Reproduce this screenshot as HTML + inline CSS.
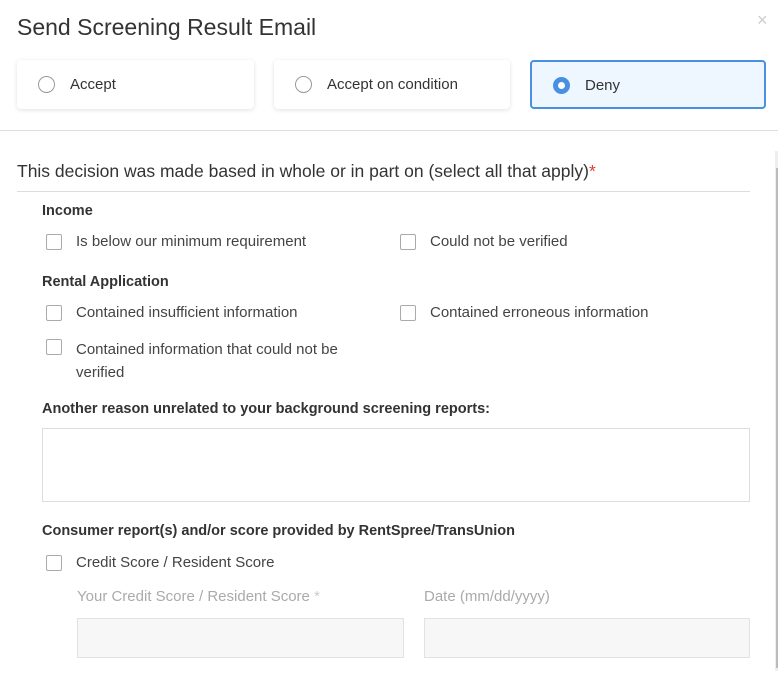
<!DOCTYPE html><html><head><style>
body{margin:0;width:778px;height:690px;background:#fff;font-family:"Liberation Sans",sans-serif;color:#333;position:relative;overflow:hidden}
.a{position:absolute;white-space:nowrap}
.card{position:absolute;top:60px;height:49px;background:#fff;border-radius:4px;box-shadow:0 1px 5px rgba(0,0,0,.12);font-size:15px}
.card .r{position:absolute;left:21px;top:16px;width:17px;height:17px;border:1px solid #999;border-radius:50%;box-sizing:border-box}
.card span{position:absolute;left:53px;top:16px}
.cb{position:absolute;width:16px;height:16px;border:1px solid #aaa;border-radius:2px;box-sizing:border-box}
.t{position:absolute;font-size:15px;color:#444;white-space:nowrap}
.h{position:absolute;font-size:14.5px;font-weight:bold;color:#333;white-space:nowrap}
</style></head><body>
<div class="a" style="left:17px;top:14px;font-size:23px;color:#333">Send Screening Result Email</div>
<div class="a" style="left:757px;top:10px;font-size:18px;color:#ccc">×</div>
<div class="card" style="left:17px;width:237px"><div class="r"></div><span>Accept</span></div>
<div class="card" style="left:274px;width:236px"><div class="r"></div><span>Accept on condition</span></div>
<div class="card" style="left:530px;width:236px;background:#eef6ff;border:2px solid #4a90e2;box-sizing:border-box;box-shadow:none"><div class="r" style="left:21px;top:15px;border:5px solid #4a90e2;background:#fff"></div><span style="top:15px">Deny</span></div>
<div class="a" style="left:0;top:130px;width:778px;height:1px;background:#ddd"></div>
<div class="a" style="left:775px;top:151px;width:3px;height:520px;background:#eee"></div>
<div class="a" style="left:776px;top:168px;width:2px;height:500px;background:#bbb"></div>
<div class="a" style="left:17px;top:161px;font-size:17.5px;color:#333">This decision was made based in whole or in part on (select all that apply)<span style="color:#e53935">*</span></div>
<div class="a" style="left:17px;top:191px;width:733px;height:1px;background:#ddd"></div>
<div class="h" style="left:42px;top:203px">Income</div>
<div class="cb" style="left:46px;top:234px"></div><div class="t" style="left:76px;top:233px">Is below our minimum requirement</div>
<div class="cb" style="left:400px;top:234px"></div><div class="t" style="left:430px;top:233px">Could not be verified</div>
<div class="h" style="left:42px;top:274px">Rental Application</div>
<div class="cb" style="left:46px;top:305px"></div><div class="t" style="left:76px;top:304px">Contained insufficient information</div>
<div class="cb" style="left:400px;top:305px"></div><div class="t" style="left:430px;top:304px">Contained erroneous information</div>
<div class="cb" style="left:46px;top:339px"></div><div class="t" style="left:76px;top:338px;line-height:23px">Contained information that could not be<br>verified</div>
<div class="h" style="left:42px;top:401px">Another reason unrelated to your background screening reports:</div>
<div class="a" style="left:42px;top:428px;width:708px;height:74px;border:1px solid #ddd;box-sizing:border-box"></div>
<div class="h" style="left:42px;top:523px">Consumer report(s) and/or score provided by RentSpree/TransUnion</div>
<div class="cb" style="left:46px;top:555px"></div><div class="t" style="left:76px;top:554px">Credit Score / Resident Score</div>
<div class="t" style="left:77px;top:588px;color:#aaa">Your Credit Score / Resident Score <span style="color:#ccc">*</span></div>
<div class="t" style="left:424px;top:588px;color:#aaa">Date (mm/dd/yyyy)</div>
<div class="a" style="left:77px;top:618px;width:327px;height:40px;background:#f7f7f7;border:1px solid #e2e2e2;box-sizing:border-box"></div>
<div class="a" style="left:424px;top:618px;width:326px;height:40px;background:#f7f7f7;border:1px solid #e2e2e2;box-sizing:border-box"></div>
</body></html>
